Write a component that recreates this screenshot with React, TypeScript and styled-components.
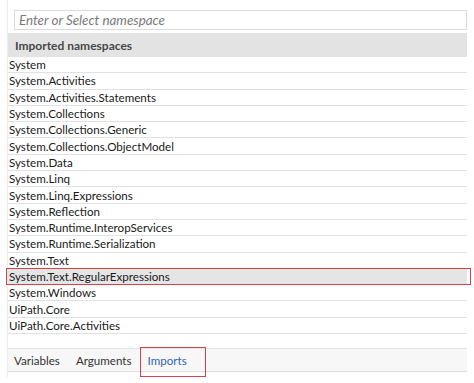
import React from 'react';
import styled, { createGlobalStyle } from 'styled-components';

const GlobalStyle = createGlobalStyle`
	html, body {
		margin: 0;
		background: #ffffff;
	}
	body {
		font-family: Lato, 'Open Sans', sans-serif;
		color: #1a1a1a;
	}
`;

const Panel = styled.div`
	margin-left: 7px;
	width: 463px;
	height: 377px;
	border-left: 1px solid #ececec;
	box-sizing: border-box;
	padding-top: 10px;
	display: flex;
	flex-direction: column;
`;

const SearchBox = styled.input`
	margin: 0 3px 0 6px;
	height: 20px;
	box-sizing: border-box;
	border: 1px solid #dadada;
	padding: 0 4px;
	font-family: inherit;
	font-size: 13.4px;
	outline: none;

	&::placeholder {
		font-style: italic;
		color: #7a7a7a;
	}
`;

const Header = styled.div`
	margin: 3px 3px 0 0;
	height: 24px;
	display: flex;
	align-items: center;
	padding-left: 7px;
	background: #e3e3e3;
	font-size: 12px;
	font-weight: 700;
	color: #484848;
`;

const List = styled.div`
	display: flex;
	flex-direction: column;
	margin-right: 3px;
	flex: 1;
`;

const Row = styled.div<{ $selected?: boolean }>`
	position: relative;
	height: 16.3px;
	box-sizing: border-box;
	display: flex;
	align-items: center;
	padding-left: 1px;
	font-size: 11.6px;
	white-space: nowrap;
	border-bottom: 1px ${(p) => (p.$selected ? 'dotted #777' : 'solid #e2e2e2')};
	background: ${(p) => (p.$selected ? '#e5e5e5' : 'transparent')};

	${(p) =>
		p.$selected &&
		`
		&::after {
			content: '';
			position: absolute;
			left: -2px;
			right: -4px;
			top: -1px;
			bottom: -1px;
			border: 1px solid #d4434c;
		}
	`}
`;

const TabBar = styled.div`
	height: 24px;
	box-sizing: border-box;
	display: flex;
	align-items: center;
	background: #f7f7f7;
	border-top: 1px solid #e4e4e4;
	border-bottom: 1px solid #dedede;
	margin: 1px 3px 5px 0;
	padding-left: 6px;
`;

const Tab = styled.div<{ $active?: boolean; $marked?: boolean }>`
	position: relative;
	font-size: 11.6px;
	margin-right: 16px;
	color: ${(p) => (p.$active ? '#2f67b3' : '#333')};

	${(p) =>
		p.$marked &&
		`
		&::after {
			content: '';
			position: absolute;
			left: -8px;
			right: -19px;
			top: -7px;
			bottom: -10px;
			border: 1px solid #d4434c;
		}
	`}
`;

const namespaces = [
	'System',
	'System.Activities',
	'System.Activities.Statements',
	'System.Collections',
	'System.Collections.Generic',
	'System.Collections.ObjectModel',
	'System.Data',
	'System.Linq',
	'System.Linq.Expressions',
	'System.Reflection',
	'System.Runtime.InteropServices',
	'System.Runtime.Serialization',
	'System.Text',
	'System.Text.RegularExpressions',
	'System.Windows',
	'UiPath.Core',
	'UiPath.Core.Activities',
];

export default function App() {
	return (
		<>
			<GlobalStyle />
			<Panel>
				<SearchBox placeholder="Enter or Select namespace" />
				<Header>Imported namespaces</Header>
				<List>
					{namespaces.map((ns) => (
						<Row key={ns} $selected={ns === 'System.Text.RegularExpressions'}>
							{ns}
						</Row>
					))}
				</List>
				<TabBar>
					<Tab>Variables</Tab>
					<Tab>Arguments</Tab>
					<Tab $active $marked>
						Imports
					</Tab>
				</TabBar>
			</Panel>
		</>
	);
}
